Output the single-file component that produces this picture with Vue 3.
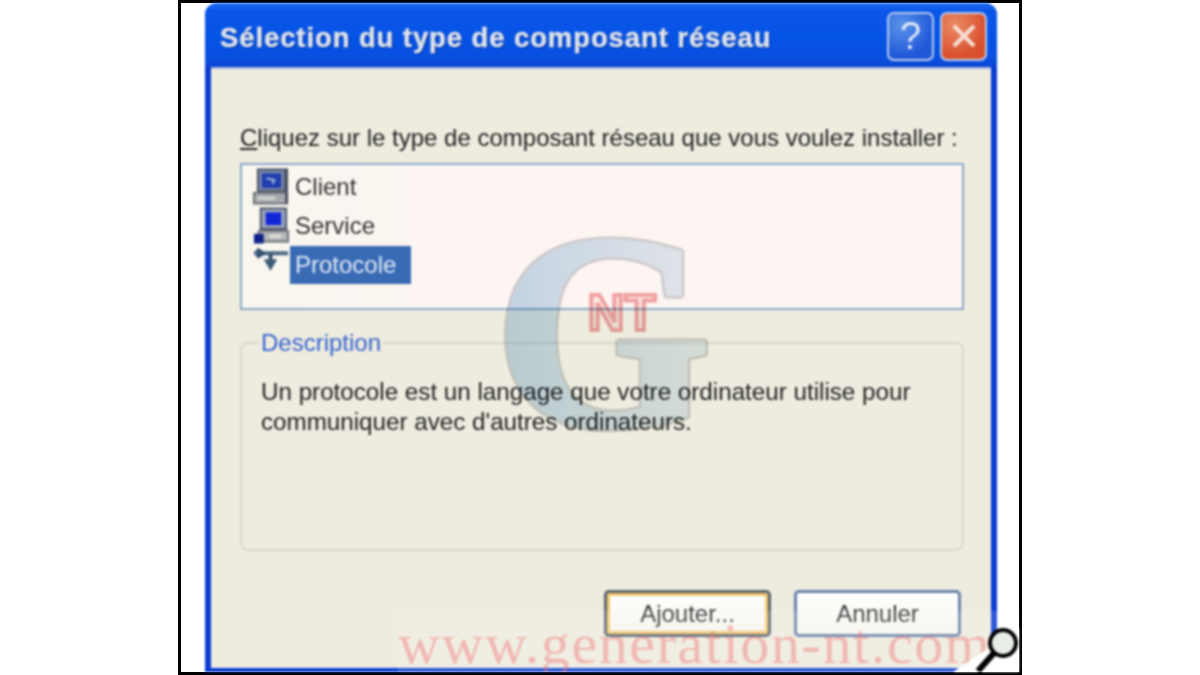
<script setup>
const items = [
  { name: "Client", icon: "client" },
  { name: "Service", icon: "service" },
  { name: "Protocole", icon: "protocol" },
];
</script>

<template>
  <div class="screen">
    <div class="frame">
      <div class="canvas">
        <div class="window">
          <div class="titlebar">
            <span class="title">Sélection du type de composant réseau</span>
            <div class="title-buttons">
              <span class="tbtn help">?</span>
              <span class="tbtn close">
                <svg width="30" height="30" viewBox="0 0 30 30">
                  <path d="M5 5 L25 25 M25 5 L5 25" stroke="#f6ded4" stroke-width="4" fill="none" />
                </svg>
              </span>
            </div>
          </div>

          <div class="body">
            <p class="prompt"><span class="ul">C</span>liquez sur le type de composant réseau que vous voulez installer :</p>

            <ul class="list">
              <li v-for="item in items" :key="item.name" class="row">
                <svg v-if="item.icon === 'client'" class="icon" viewBox="0 0 38 40">
                  <rect x="5" y="2" width="28" height="22" fill="#7c87a8" stroke="#4c5568" stroke-width="2" />
                  <rect x="9" y="6" width="20" height="15" fill="#1f3fb0" />
                  <path d="M14 11 L22 13 L20 17" stroke="#9fb4dc" stroke-width="2" fill="none" />
                  <rect x="1" y="26" width="34" height="11" fill="#a7abb0" stroke="#6c7078" stroke-width="2" />
                  <rect x="5" y="30" width="18" height="3" fill="#d8d8d0" />
                  <rect x="33" y="1" width="3" height="36" fill="#4c5260" />
                </svg>
                <svg v-else-if="item.icon === 'service'" class="icon" viewBox="0 0 38 40">
                  <rect x="8" y="2" width="26" height="21" fill="#9aa3bc" stroke="#4c5568" stroke-width="2" />
                  <rect x="13" y="6" width="16" height="13" fill="#1226d8" />
                  <rect x="6" y="25" width="30" height="11" fill="#b4b6b8" stroke="#6c7078" stroke-width="2" />
                  <rect x="1" y="28" width="10" height="10" fill="#12208c" />
                  <rect x="17" y="29" width="12" height="3" fill="#e4e4dc" />
                </svg>
                <svg v-else class="icon" viewBox="0 0 38 40">
                  <path d="M1 8 H36" stroke="#4b6a86" stroke-width="4" fill="none" />
                  <path d="M4 4 L10 8 L4 12 M18 8 V22" stroke="#33506c" stroke-width="4" fill="none" />
                  <path d="M11 14 L18 26 L25 14 Z" fill="#3e5a76" />
                </svg>
                <span class="row-label" :class="{ selected: item.name === 'Protocole' }">{{ item.name }}</span>
              </li>
            </ul>

            <fieldset class="group">
              <legend>Description</legend>
              <p>Un protocole est un langage que votre ordinateur utilise pour<br />communiquer avec d'autres ordinateurs.</p>
            </fieldset>

            <div class="actions">
              <button class="btn default">Ajouter...</button>
              <button class="btn">Annuler</button>
            </div>
          </div>
        </div>

        <!-- filigrane du site, par-dessus la fenetre -->
        <svg class="logo" width="250" height="250" viewBox="0 0 250 250">
          <defs>
            <linearGradient id="gfill" x1="0" y1="0" x2="1" y2="0">
              <stop offset="0" stop-color="#c4dbee" />
              <stop offset="1" stop-color="#e6eff6" />
            </linearGradient>
          </defs>
          <text x="3" y="212" class="logo-g outer">G</text>
          <text x="3" y="212" class="logo-g inner">G</text>
          <text x="96" y="117" class="logo-nt">NT</text>
        </svg>
        <div class="site">www.generation-nt.com</div>

        <div class="corner"></div>
        <svg class="loupe" width="52" height="52" viewBox="0 0 52 52">
          <circle cx="34" cy="19" r="13" fill="#e8efe9" stroke="#000" stroke-width="4" />
          <path d="M25 29 L9 47" stroke="#000" stroke-width="6" fill="none" />
        </svg>
      </div>
    </div>
  </div>
</template>

<style scoped>
.screen {
  width: 1200px;
  height: 675px;
  display: flex;
  justify-content: center;
  background: #fff;
  overflow: hidden;
}

.frame {
  box-sizing: border-box;
  width: 844px;
  height: 675px;
  border: 3px solid #000;
  background: #fff;
  font-family: Tahoma, "Liberation Sans", sans-serif;
}

.canvas {
  position: relative;
  box-sizing: border-box;
  height: 100%;
  padding: 0 22px 0 24px;
  filter: blur(0.9px);
  overflow: hidden;
}

.window {
  display: flex;
  flex-direction: column;
  height: 100%;
  border-radius: 12px 12px 0 0;
  background: #0a3cd2;
}

.titlebar {
  flex: none;
  height: 64px;
  display: flex;
  align-items: center;
  justify-content: space-between;
  padding: 0 10px 0 15px;
  border-radius: 12px 12px 0 0;
  background: linear-gradient(180deg, #1f6bf0 0%, #0a56ea 12%, #0553e4 60%, #0a4fe0 88%, #0b45cf 100%);
}

.title {
  font-size: 27.5px;
  font-weight: 700;
  letter-spacing: 0.9px;
  color: #dfe4ec;
  -webkit-text-stroke: 0.4px #dfe4ec;
  text-shadow: 1px 1px 2px #0a2f90;
  margin-top: 6px;
}

.title-buttons {
  display: flex;
  gap: 6px;
  margin-top: 2px;
}

.tbtn {
  box-sizing: border-box;
  width: 47px;
  height: 49px;
  display: flex;
  align-items: center;
  justify-content: center;
  border: 2px solid #b6cbed;
  border-radius: 7px;
  color: #dfe9f8;
}

.help {
  background: radial-gradient(circle at 30% 25%, #5c93ea, #1f58d8 70%);
  font-size: 38px;
}

.close {
  background: radial-gradient(circle at 30% 25%, #ea8a64, #d9502c 70%);
}

.body {
  flex: 1;
  display: flex;
  flex-direction: column;
  margin: 0 6px 4px 6px;
  padding: 0 27px 0 29px;
  background: #eeecdf;
  border-top: 2px solid #a9bce0;
}

.prompt {
  margin: 54px 0 0;
  font-size: 24px;
  line-height: 30px;
  color: #222;
  white-space: nowrap;
}

.ul {
  text-decoration: underline;
}

.list {
  box-sizing: border-box;
  height: 147px;
  margin: 10px 0 0;
  padding: 2px 0 0 11px;
  list-style: none;
  background: linear-gradient(90deg, #f8f6ee 0%, #fdf5f2 30%, #fcf5f3 100%);
  border: 2px solid #8ba9c8;
}

.row {
  display: flex;
  align-items: center;
  height: 39px;
}

.icon {
  flex: none;
  width: 37px;
  height: 40px;
}

.row-label {
  padding: 0 15px 0 5px;
  font-size: 24px;
  line-height: 38px;
  color: #333;
}

.row-label.selected {
  background: #396bb5;
  color: #dfe8f6;
}

.group {
  box-sizing: border-box;
  height: 224px;
  margin: 17px 0 0;
  padding: 18px 19px 0;
  min-width: 0;
  border: 2px solid #dad8c9;
  border-radius: 8px;
}

.group legend {
  padding: 0 2px;
  margin-left: -2px;
  font-size: 24px;
  line-height: 32px;
  color: #3662cf;
}

.group p {
  margin: 0;
  font-size: 24.2px;
  line-height: 30px;
  color: #222;
  white-space: nowrap;
}

.actions {
  display: flex;
  justify-content: flex-end;
  gap: 23px;
  margin-top: 39px;
  padding-right: 3px;
}

.btn {
  box-sizing: border-box;
  width: 167px;
  height: 47px;
  padding: 0;
  border: 3px solid #6a82aa;
  border-radius: 5px;
  background: linear-gradient(180deg, #fff 0%, #f6f4ec 100%);
  font-family: inherit;
  font-size: 24px;
  color: #333;
}

.btn.default {
  box-shadow: inset 0 0 0 3px #f3c66e;
  border-color: #5b6670;
}

.logo {
  position: absolute;
  left: 311px;
  top: 210px;
  mix-blend-mode: multiply;
}

.logo-g {
  font-family: "Liberation Serif", serif;
  font-weight: 700;
  font-size: 278px;
}

.logo-g.outer {
  fill: none;
  stroke: #cfd0d4;
  stroke-width: 9px;
  stroke-linejoin: round;
}

.logo-g.inner {
  fill: url(#gfill);
  stroke: url(#gfill);
  stroke-width: 4px;
  stroke-linejoin: round;
}

.logo-nt {
  font-family: "Liberation Sans", sans-serif;
  font-weight: 700;
  font-size: 50px;
  letter-spacing: 1px;
  fill: #fdf3f3;
  stroke: #f2a8aa;
  stroke-width: 4px;
}

.site {
  position: absolute;
  left: 217px;
  top: 608px;
  right: 0;
  height: 64px;
  font-family: "Liberation Serif", serif;
  font-size: 58px;
  line-height: 66px;
  letter-spacing: 1.6px;
  white-space: nowrap;
  color: rgba(240, 110, 110, 0.42);
  background: rgba(255, 255, 255, 0.14);
}

.corner {
  position: absolute;
  right: 0;
  bottom: 0;
  width: 66px;
  height: 44px;
  background: #fff;
  clip-path: polygon(100% 0, 100% 100%, 0 100%);
}

.loupe {
  position: absolute;
  right: -2px;
  bottom: -4px;
}
</style>

<style>
html,
body {
  background: #fff;
}
</style>
